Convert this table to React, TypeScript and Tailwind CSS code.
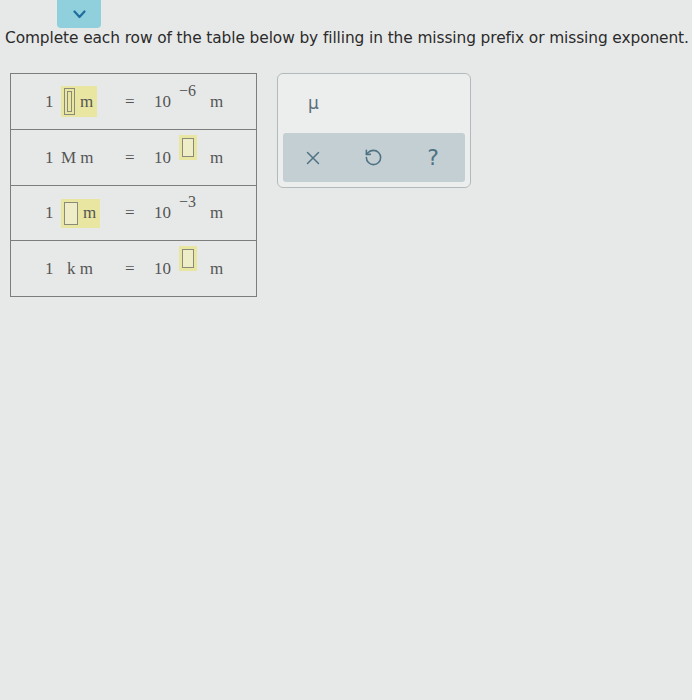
import React from 'react';
import { RotateCcw, X } from 'lucide-react';

const serif = { fontFamily: '"Liberation Serif", "Times New Roman", serif' };

// yellow-highlighted empty answer slot
const Slot: React.FC<{ tall?: boolean; focused?: boolean }> = ({ tall, focused }) => (
  <span className={`inline-flex items-center justify-center bg-[#e9e6a2] ${focused ? 'px-[3px] py-[2px]' : 'px-[3px] py-[3px]'}`}>
    {focused ? (
      <span className="block w-[11px] h-[27px] border border-[#8a8a7a] p-[2px]">
        <span className="block w-full h-full border border-[#8a8a7a]" />
      </span>
    ) : (
      <span className={`block border border-[#8a8a7a] bg-[#efedc8] ${tall ? 'w-[14px] h-[23px]' : 'w-[12px] h-[19px]'}`} />
    )}
  </span>
);

const Row: React.FC<{
  prefix: React.ReactNode;
  exp: React.ReactNode;
  h: string;
  last?: boolean;
}> = ({ prefix, exp, h, last }) => (
  <div className={`flex items-center text-[17px] text-[#555] ${h} ${last ? '' : 'border-b border-[#7d7d7d]'}`} style={serif}>
    <span className="w-[34px]" />
    <span className="w-[16px]">1</span>
    <span className="w-[64px] flex items-center">{prefix}</span>
    <span className="w-[29px]">=</span>
    <span className="w-[25px]">10</span>
    <span className="w-[31px] flex items-start -mt-[22px]">{exp}</span>
    <span>m</span>
  </div>
);

export default function App() {
  return (
    <div
      className="w-[692px] h-[700px] bg-[#e7e9e8] overflow-hidden"
      style={{ fontFamily: '"DejaVu Sans", Verdana, sans-serif' }}
    >
      <div className="ml-[57px] w-[44px] h-[28px] bg-[#8fd0dc] rounded-b-[4px] flex items-center justify-center">
        <svg width="13" height="9" viewBox="0 0 13 9" fill="none">
          <path d="M1.5 1.5 L6.5 7 L11.5 1.5" stroke="#1e6d9c" strokeWidth="2.2" strokeLinecap="round" strokeLinejoin="round" />
        </svg>
      </div>

      <p className="pl-[5px] text-[15.4px] leading-[20px] text-[#2b2b2b] tracking-[-0.1px] whitespace-nowrap">
        Complete each row of the table below by filling in the missing prefix or missing exponent.
      </p>

      <div className="flex items-start mt-[25px] ml-[10px] gap-[20px]">
        <div className="w-[247px] border border-[#7d7d7d]">
          <Row
            h="h-[56px]"
            prefix={
              <span className="flex items-center bg-[#e9e6a2] pr-[4px]">
                <Slot focused />
                <span className="ml-[2px]">m</span>
              </span>
            }
            exp={<span className="text-[16px]">−6</span>}
          />
          <Row
            h="h-[56px]"
            prefix={<span>M m</span>}
            exp={<span className="mt-[6px]"><Slot /></span>}
          />
          <Row
            h="h-[55px]"
            prefix={
              <span className="flex items-center bg-[#e9e6a2] pr-[4px]">
                <Slot tall />
                <span className="ml-[2px]">m</span>
              </span>
            }
            exp={<span className="text-[16px]">−3</span>}
          />
          <Row
            h="h-[55px]"
            last
            prefix={<span className="ml-[6px]">k m</span>}
            exp={<span className="mt-[6px]"><Slot /></span>}
          />
        </div>

        <div className="w-[194px] h-[115px] rounded-[6px] border border-[#b3babd] bg-[#eceeed] px-[5px] pt-[17px]">
          <div className="pl-[25px] h-[42px] text-[17px] text-[#5c6f7a]">μ</div>
          <div className="h-[49px] rounded-[3px] bg-[#c4cfd4] flex items-center text-[#4f7383]">
            <span className="w-[60px] flex justify-center">
              <X size={22} strokeWidth={1.6} color="#4f7383" />
            </span>
            <span className="w-[60px] flex justify-center">
              <RotateCcw size={19} strokeWidth={2} color="#4f7383" />
            </span>
            <span className="w-[60px] flex justify-center text-[22px] leading-none">?</span>
          </div>
        </div>
      </div>
    </div>
  );
}
